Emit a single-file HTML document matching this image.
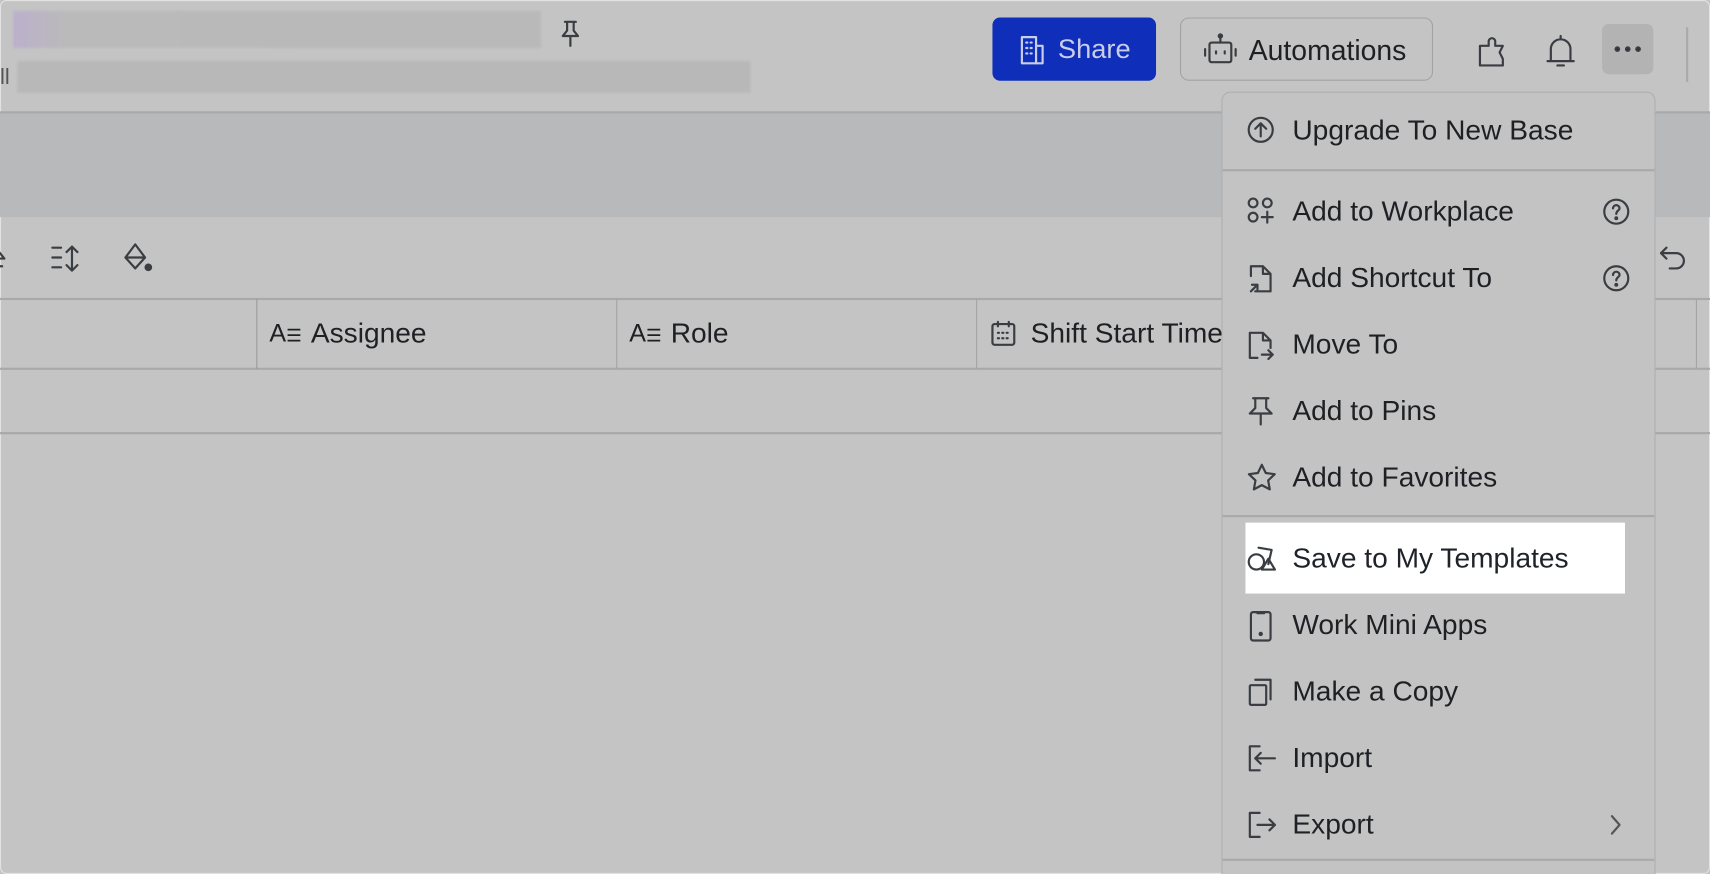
<!DOCTYPE html>
<html><head><meta charset="utf-8"><style>
html,body{margin:0;padding:0;width:1710px;height:874px;overflow:hidden;background:#c4c4c4}
#s{position:absolute;left:0;top:0;width:1568px;height:801px;overflow:hidden;transform:scale(1.0906,1.0911);transform-origin:0 0;font-family:"Liberation Sans",sans-serif;color:#1e2024;background:#c4c4c4}
.a{position:absolute}
.mi{position:absolute;left:0;width:396px;height:60px;font-size:25.8px;line-height:62px}
.mi .t{position:absolute;left:64px;top:0}
.mi svg{position:absolute;left:22px;top:17px}
.mi svg.q{position:absolute;left:348px;top:18px}
svg{fill:none;stroke:#3a3d42;stroke-width:2;stroke-linecap:round;stroke-linejoin:round}
</style></head><body><div id="s">
<div class="a" style="left:0;top:0;width:1566px;height:799px;border:1px solid #e2e2e2;border-radius:6px"></div>
<div class="a" style="left:12px;top:10px;width:484px;height:34px;background:linear-gradient(90deg,#bcb0cc,#bababa 10%,#b9b9b9);filter:blur(1px)"></div>
<div class="a" style="left:16px;top:56px;width:672px;height:29px;background:#b8b8b8;filter:blur(1px)"></div>
<div class="a" style="left:0;top:60px;font-size:20px;color:#555">ll</div>
<svg class="a" style="left:512px;top:18px" width="22" height="26" viewBox="0 0 22 26"><path d="M6 2h10M8 2v8l-4 5h14l-4-5V2M11 15v9"/></svg>
<div class="a" style="left:0;top:102px;width:1568px;height:2px;background:#a9a9a9"></div>
<div class="a" style="left:0;top:104px;width:1568px;height:95px;background:#b8b9ba"></div>
<svg class="a" style="left:-6px;top:224px" width="14" height="26" viewBox="0 0 14 26"><path d="M2 3l8 10-8 0M2 20h6"/></svg>
<svg class="a" style="left:46px;top:224px" width="30" height="26" viewBox="0 0 30 26"><path d="M2 3h8M2 12h8M2 21h8M20 2v22M15 7l5-5 5 5M15 19l5 5 5-5"/></svg>
<svg class="a" style="left:112px;top:222px" width="30" height="30" viewBox="0 0 30 30"><path d="M12 2L3 14l9 10 9-10z M3 14h18"/><circle cx="24" cy="23" r="2.5" fill="#3a3d42"/></svg>
<svg class="a" style="left:1520px;top:224px" width="28" height="26" viewBox="0 0 28 26"><path d="M8 3L3 8l5 5M3 8h14a7 7 0 010 14h-6"/></svg>
<div class="a" style="left:0;top:273px;width:1568px;height:2px;background:#a9a9a9"></div>
<div class="a" style="left:0;top:337px;width:1568px;height:2px;background:#a9a9a9"></div>
<div class="a" style="left:0;top:396px;width:1568px;height:2px;background:#a9a9a9"></div>
<div class="a" style="left:235px;top:274px;width:1px;height:64px;background:#999"></div>
<div class="a" style="left:565px;top:274px;width:1px;height:64px;background:#a4a4a4"></div>
<div class="a" style="left:895px;top:274px;width:1px;height:64px;background:#a4a4a4"></div>
<div class="a" style="left:1555px;top:274px;width:1px;height:64px;background:#a4a4a4"></div>
<div class="a" style="left:247px;top:292px;font-size:23px">A<span style="font-size:16px">☰</span></div>
<div class="a" style="left:285px;top:292px;font-size:25.8px">Assignee</div>
<div class="a" style="left:577px;top:292px;font-size:23px">A<span style="font-size:16px">☰</span></div>
<div class="a" style="left:615px;top:292px;font-size:25.8px">Role</div>
<svg class="a" style="left:908px;top:294px" width="24" height="24" viewBox="0 0 24 24"><rect x="2" y="3" width="20" height="19" rx="2"/><path d="M7 1v4M17 1v4M7 11h1M11 11h1M15 11h1M7 16h1M11 16h1M15 16h1"/></svg>
<div class="a" style="left:945px;top:292px;font-size:25.8px;white-space:nowrap">Shift Start Time</div>
<div class="a" style="left:910px;top:16px;width:150px;height:58px;background:#0f2fbb;border-radius:7px"></div>
<svg class="a" style="left:935px;top:32px;stroke:#c8cde8" width="24" height="28" viewBox="0 0 24 28"><rect x="2" y="2" width="13" height="24"/><path d="M15 10h6v16h-6M6 7h1M10 7h1M6 12h1M10 12h1M6 17h1M10 17h1"/></svg>
<div class="a" style="left:970px;top:31px;font-size:25px;color:#c8cde8">Share</div>
<div class="a" style="left:1082px;top:16px;width:230px;height:56px;border:1px solid #a2a2a2;border-radius:8px"></div>
<svg class="a" style="left:1103px;top:30px" width="32" height="30" viewBox="0 0 32 30"><rect x="6" y="9" width="20" height="18" rx="2"/><path d="M16 3v6M2 15v6M30 15v6M12 17v2M20 17v2"/><circle cx="16" cy="3" r="1.5" fill="#3a3d42"/></svg>
<div class="a" style="left:1145px;top:31px;font-size:26px">Automations</div>
<svg class="a" style="left:1354px;top:32px" width="28" height="30" viewBox="0 0 28 30"><path d="M3 10h8V6a3 3 0 016 0v4h7l-3 6 3 6v6H3z"/></svg>
<svg class="a" style="left:1417px;top:31px" width="28" height="32" viewBox="0 0 28 32"><path d="M5 25V14a9 9 0 0118 0v11zM2 25h24M11 29h6M14 2v3"/></svg>
<div class="a" style="left:1469px;top:22px;width:47px;height:46px;background:#b3b3b3;border-radius:6px"></div>
<svg class="a" style="left:1469px;top:22px" width="47" height="46" viewBox="0 0 47 46"><circle cx="14" cy="23" r="1.6" fill="#222"/><circle cx="23.5" cy="23" r="1.6" fill="#222"/><circle cx="33" cy="23" r="1.6" fill="#222"/></svg>
<div class="a" style="left:1546px;top:25px;width:2px;height:50px;background:#aaa"></div>
<div class="a" style="left:1120px;top:84px;width:396px;height:730px;background:#c3c3c3;border:1px solid #afafaf;border-radius:8px;overflow:hidden">
 <div class="mi" style="top:4px"><svg width="26" height="26" viewBox="0 0 26 26"><circle cx="13" cy="13" r="11"/><path d="M13 19V7M8 12l5-5 5 5"/></svg><span class="t">Upgrade To New Base</span></div>
 <div class="a" style="left:0;top:70px;width:396px;height:2px;background:#aaa"></div>
 <div class="mi" style="top:78px"><svg width="26" height="26" viewBox="0 0 26 26"><rect x="2" y="2" width="8" height="8" rx="4"/><rect x="15" y="2" width="8" height="8" rx="4"/><rect x="2" y="15" width="8" height="8" rx="4"/><path d="M19 14v10M14 19h10"/></svg><span class="t">Add to Workplace</span><svg class="q" width="26" height="26" viewBox="0 0 26 26"><circle cx="13" cy="13" r="11"/><path d="M10 10a3 3 0 116 0c0 2-3 2-3 5"/><circle cx="13" cy="19" r="0.8" fill="#3a3d42"/></svg></div>
 <div class="mi" style="top:139px"><svg width="26" height="28" viewBox="0 0 26 28"><path d="M4 12V3h11l7 7v16H8M15 3v7h7M4 26l6-6M5 20h5v5"/></svg><span class="t">Add Shortcut To</span><svg class="q" width="26" height="26" viewBox="0 0 26 26"><circle cx="13" cy="13" r="11"/><path d="M10 10a3 3 0 116 0c0 2-3 2-3 5"/><circle cx="13" cy="19" r="0.8" fill="#3a3d42"/></svg></div>
 <div class="mi" style="top:200px"><svg width="26" height="28" viewBox="0 0 26 28"><path d="M10 26H3V3h12l7 7v7M15 3v7h7M14 23h10M20 19l4 4-4 4"/></svg><span class="t">Move To</span></div>
 <div class="mi" style="top:261px"><svg width="26" height="28" viewBox="0 0 26 28"><path d="M6 2h14M8 2v9l-5 5h20l-5-5V2M13 16v10"/></svg><span class="t">Add to Pins</span></div>
 <div class="mi" style="top:322px"><svg width="28" height="28" viewBox="0 0 28 28"><path d="M14 2l3.6 7.5 8.2 1.1-6 5.7 1.5 8.2L14 20.6l-7.3 3.9 1.5-8.2-6-5.7 8.2-1.1z"/></svg><span class="t">Add to Favorites</span></div>
 <div class="a" style="left:0;top:387px;width:396px;height:2px;background:#aaa"></div>
 <div class="a" style="left:21px;top:394px;width:348px;height:65px;background:#fff"></div>
 <div class="mi" style="top:396px"><svg width="28" height="28" viewBox="0 0 28 28"><circle cx="9" cy="17" r="7"/><path d="M11 4l12 2-3 13M14 24h12l-6-10z"/></svg><span class="t" style="color:#1f2329">Save to My Templates</span></div>
 <div class="mi" style="top:457px"><svg width="26" height="30" viewBox="0 0 26 30"><rect x="4" y="2" width="18" height="26" rx="2"/><path d="M10 3h6"/><circle cx="13" cy="22" r="1" fill="#3a3d42"/></svg><span class="t">Work Mini Apps</span></div>
 <div class="mi" style="top:518px"><svg width="26" height="28" viewBox="0 0 26 28"><rect x="3" y="8" width="15" height="18" rx="1"/><path d="M8 3h14v18"/></svg><span class="t">Make a Copy</span></div>
 <div class="mi" style="top:579px"><svg width="28" height="28" viewBox="0 0 28 28"><path d="M12 3H3v22h9M8 14h18M13 9l-5 5 5 5"/></svg><span class="t">Import</span></div>
 <div class="mi" style="top:640px"><svg width="28" height="28" viewBox="0 0 28 28"><path d="M12 3H3v22h9M10 14h16M21 9l5 5-5 5"/></svg><span class="t">Export</span><svg class="q" style="left:352px;top:20px" width="16" height="22" viewBox="0 0 16 22"><path d="M5 3l7 8-7 8" stroke="#555"/></svg></div>
 <div class="a" style="left:0;top:702px;width:396px;height:2px;background:#aaa"></div>
</div>
</div></body></html>
